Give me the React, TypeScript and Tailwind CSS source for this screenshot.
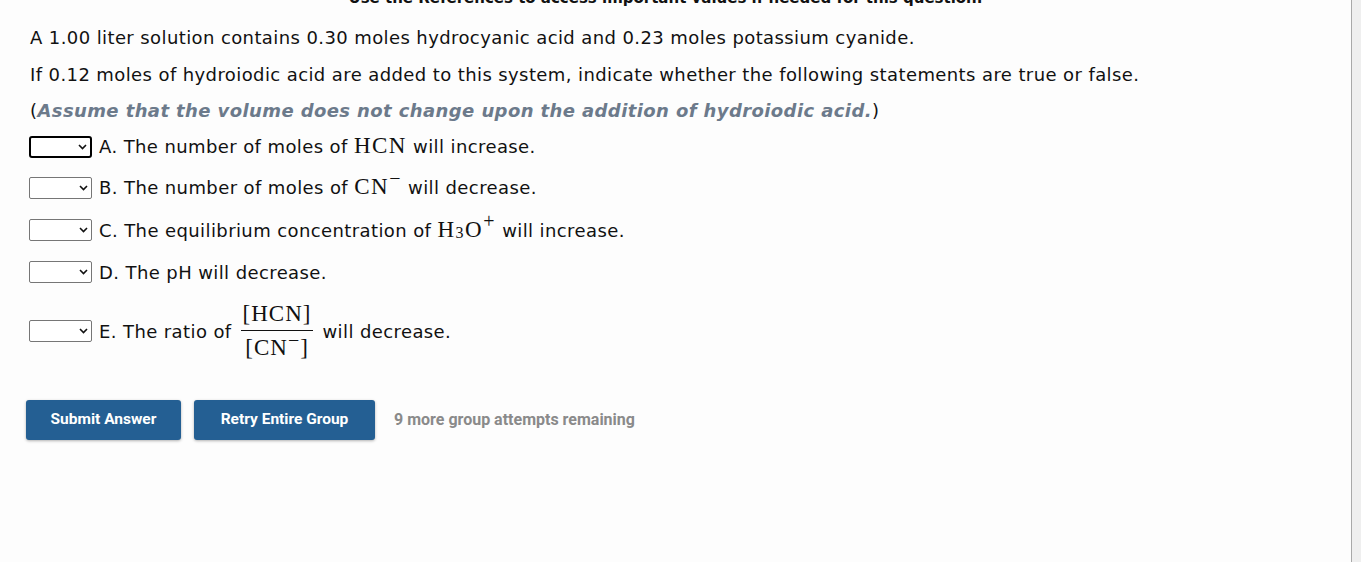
import React from "react"

function Pick({ focused }: { focused?: boolean }) {
  return (
    <div
      className={
        "relative h-[22px] w-[63px] shrink-0 bg-white " +
        (focused
          ? "rounded-[3px] border-2 border-black"
          : "rounded-[2px] border border-[#767676]")
      }
    >
      <svg
        className="absolute right-[3px] top-1/2 -translate-y-1/2"
        width="9"
        height="6"
        viewBox="0 0 9 6"
      >
        <path d="M1 1l3.5 3.5L8 1" fill="none" stroke="#111" strokeWidth="1.6" />
      </svg>
    </div>
  )
}

function M({ children }: { children: React.ReactNode }) {
  return (
    <span className="font-['Liberation_Serif',serif] text-[23px] tracking-[1.5px]">{children}</span>
  )
}

export default function App() {
  const rows: { key: string; focused?: boolean; body: React.ReactNode; h: string }[] = [
    {
      key: "A",
      focused: true,
      h: "h-[41px]",
      body: (
        <>
          A. The number of moles of <M>HCN</M> will increase.
        </>
      ),
    },
    {
      key: "B",
      h: "h-[41px]",
      body: (
        <>
          B. The number of moles of{" "}
          <M>
            CN<sup className="text-[20px] -top-[0.45em]">−</sup>
          </M>{" "}
          will decrease.
        </>
      ),
    },
    {
      key: "C",
      h: "h-[44px]",
      body: (
        <>
          C. The equilibrium concentration of{" "}
          <M>
            H<sub className="text-[16px] -bottom-[0.1em]">3</sub>O
            <sup className="text-[20px] -top-[0.45em]">+</sup>
          </M>{" "}
          will increase.
        </>
      ),
    },
    {
      key: "D",
      h: "h-[40px]",
      body: <>D. The pH will decrease.</>,
    },
  ]

  return (
    <div className="relative h-[562px] overflow-hidden bg-[#fdfdfd] font-['DejaVu_Sans',Verdana,sans-serif] text-[18px] tracking-[0.4px] text-[#111]">
      <div className="absolute right-0 top-0 h-full w-[10px] border-l border-[#a9a9a9] bg-[#efefef]" />
      <div className="-mt-[11px] h-[18px] pr-[30px] text-center text-[15px] font-bold leading-[18px] tracking-normal">
        Use the References to access important values if needed for this question.
      </div>
      <div className="-mt-[1px] pl-[30px] pt-[20px]">
        <p className="h-[37px] leading-[24px]">
          A 1.00 liter solution contains 0.30 moles hydrocyanic acid and 0.23 moles potassium cyanide.
        </p>
        <p className="h-[36px] leading-[24px]">
          If 0.12 moles of hydroiodic acid are added to this system, indicate whether the following
          statements are true or false.
        </p>
        <p className="h-[27px] leading-[24px]">
          (
          <span className="font-bold italic text-[#6c7a8b]">
            Assume that the volume does not change upon the addition of hydroiodic acid.
          </span>
          )
        </p>
        <div className="-ml-[1px]">
          {rows.map((r) => (
            <div key={r.key} className={"flex items-center gap-[7px] " + r.h}>
              <Pick focused={r.focused} />
              <span className="whitespace-nowrap">{r.body}</span>
            </div>
          ))}
          <div className="flex h-[78px] items-center gap-[7px]">
            <Pick />
            <span className="flex items-center whitespace-nowrap">
              E. The ratio of
              <span className="mx-[9px] inline-flex flex-col items-center font-['Liberation_Serif',serif] text-[23px] leading-[24px] tracking-[1px]">
                <span className="px-[2px] pb-[4px]">[HCN]</span>
                <span className="h-[1px] w-full bg-[#111]" />
                <span className="px-[2px] pt-[5px]">
                  [CN<sup className="text-[20px] -top-[0.4em]">−</sup>]
                </span>
              </span>
              will decrease.
            </span>
          </div>
        </div>
        <div className="mt-[30px] flex items-center font-['Roboto',sans-serif] font-bold tracking-normal">
          <button className="-ml-[4px] h-[40px] w-[155px] rounded-[3px] bg-[#245f93] text-[15.5px] text-white shadow-[0_1px_3px_rgba(0,0,0,0.3)]">
            Submit Answer
          </button>
          <button className="ml-[13px] h-[40px] w-[181px] rounded-[3px] bg-[#245f93] text-[15.5px] text-white shadow-[0_1px_3px_rgba(0,0,0,0.3)]">
            Retry Entire Group
          </button>
          <span className="ml-[19px] text-[16px] text-[#8a8a8a]">9 more group attempts remaining</span>
        </div>
      </div>
    </div>
  )
}
